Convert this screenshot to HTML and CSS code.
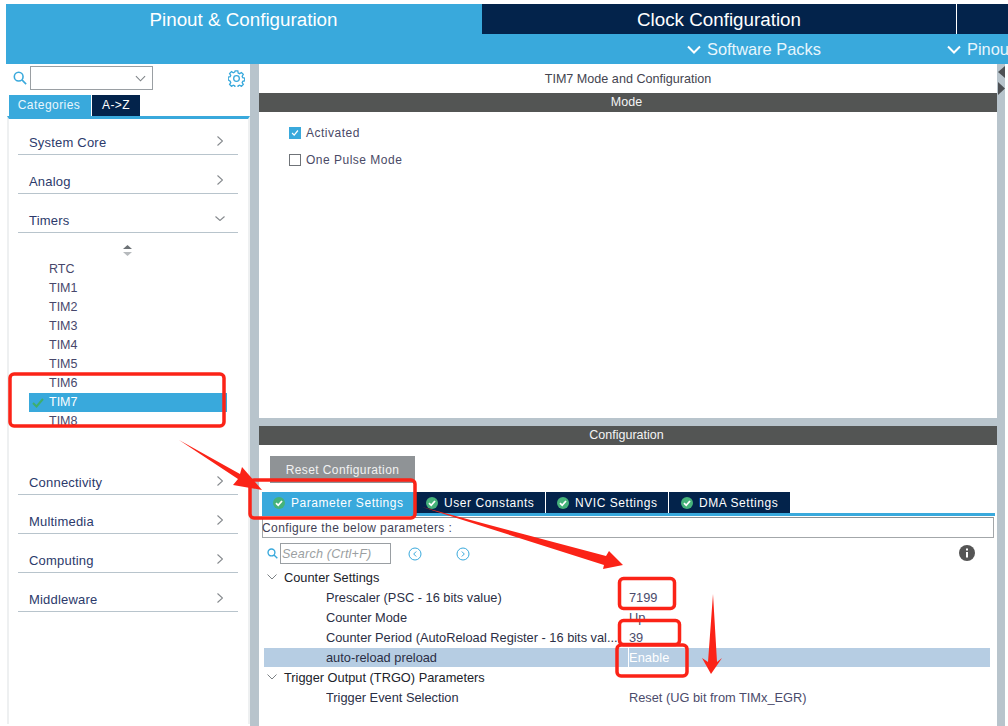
FILE: index.html
```html
<!DOCTYPE html>
<html lang="en">
<head>
<meta charset="utf-8">
<title>TIM7 Mode and Configuration</title>
<link rel="stylesheet" href="styles.css">
</head>
<body>
<div class="app">
  <header class="header">
    <div class="tabs-top">
      <div class="top-tab active">Pinout &amp; Configuration</div>
      <div class="top-tab clock">Clock Configuration</div>
      <div class="top-tab rest"></div>
    </div>
    <div class="subbar">
      <div class="sub sw"><svg class="sub-chev" viewBox="0 0 14 9"><path d="M1 1.500 7 7.500 13 1.500"/></svg>Software Packs</div>
      <div class="sub po"><svg class="sub-chev" viewBox="0 0 14 9"><path d="M1 1.500 7 7.500 13 1.500"/></svg>Pinout</div>
    </div>
  </header>
  <main class="main">
    <aside class="side">
      <div class="searchrow">
        <svg class="mag" viewBox="0 0 16 16"><circle cx="6.500" cy="6.500" r="5"/><path d="M10.200 10.200 15 15"/></svg>
        <div class="combo"><svg class="combo-chev" viewBox="0 0 12 7"><path d="M1 1 6 6 11 1"/></svg></div>
        <svg class="gear" viewBox="0 0 18 18"><circle cx="9" cy="9" r="3"/><path d="M7.600 1h2.800l.4 2.200 1.500.7 1.900-1.200 2 2-1.200 1.900.6 1.500 2.100.5v2.800l-2.100.5-.6 1.500 1.200 1.900-2 2-1.900-1.200-1.500.6-.4 2.200H7.600l-.5-2.200-1.500-.6-1.900 1.200-2-2 1.200-1.900-.6-1.500L.2 10.400V7.600l2.100-.5.6-1.500-1.200-1.900 2-2 1.900 1.200 1.500-.7z"/></svg>
      </div>
      <div class="side-tabs">
        <div class="stab on">Categories</div>
        <div class="stab">A-&gt;Z</div>
      </div>
      <div class="tree">
        <div class="cat"><span>System Core</span><svg class="ch-r" viewBox="0 0 6 10"><path d="M.5 .5 5.500 5 .5 9.500"/></svg></div>
        <div class="cat"><span>Analog</span><svg class="ch-r" viewBox="0 0 6 10"><path d="M.5 .5 5.500 5 .5 9.500"/></svg></div>
        <div class="cat"><span>Timers</span><svg class="ch-d" viewBox="0 0 10 5"><path d="M.5 .5 5 4.500 9.500 .5"/></svg></div>
        <div class="sort"><svg viewBox="0 0 9 11"><path class="up" d="M4.500 0 9 4H0z"/><path class="dn" d="M4.500 11 0 7h9z"/></svg></div>
        <ul class="timers">
          <li>RTC</li><li>TIM1</li><li>TIM2</li><li>TIM3</li><li>TIM4</li><li>TIM5</li><li>TIM6</li>
          <li class="sel"><svg class="tick" viewBox="0 0 12 10"><path d="M1 5 4.500 8.500 11 1"/></svg>TIM7</li>
          <li>TIM8</li>
        </ul>
        <div class="cat"><span>Connectivity</span><svg class="ch-r" viewBox="0 0 6 10"><path d="M.5 .5 5.500 5 .5 9.500"/></svg></div>
        <div class="cat"><span>Multimedia</span><svg class="ch-r" viewBox="0 0 6 10"><path d="M.5 .5 5.500 5 .5 9.500"/></svg></div>
        <div class="cat"><span>Computing</span><svg class="ch-r" viewBox="0 0 6 10"><path d="M.5 .5 5.500 5 .5 9.500"/></svg></div>
        <div class="cat"><span>Middleware</span><svg class="ch-r" viewBox="0 0 6 10"><path d="M.5 .5 5.500 5 .5 9.500"/></svg></div>
      </div>
    </aside>
    <section class="content">
      <div class="mode-pane">
        <div class="pane-title">TIM7 Mode and Configuration</div>
        <div class="dark-bar">Mode</div>
        <label class="chk first"><span class="box on"><svg viewBox="0 0 12 12"><path d="M2.500 6 5 8.500 9.500 3"/></svg></span>Activated</label>
        <label class="chk"><span class="box"></span>One Pulse Mode</label>
      </div>
      <div class="splitter"></div>
      <div class="conf-pane">
        <div class="dark-bar">Configuration</div>
        <div class="reset">Reset Configuration</div>
        <div class="conf-tabs">
          <div class="ctab on"><svg class="okic" viewBox="0 0 12 12"><circle cx="6" cy="6" r="6"/><path d="M3 6.200 5.200 8.300 9 4"/></svg>Parameter Settings</div>
          <div class="ctab"><svg class="okic" viewBox="0 0 12 12"><circle cx="6" cy="6" r="6"/><path d="M3 6.200 5.200 8.300 9 4"/></svg>User Constants</div>
          <div class="ctab"><svg class="okic" viewBox="0 0 12 12"><circle cx="6" cy="6" r="6"/><path d="M3 6.200 5.200 8.300 9 4"/></svg>NVIC Settings</div>
          <div class="ctab"><svg class="okic" viewBox="0 0 12 12"><circle cx="6" cy="6" r="6"/><path d="M3 6.200 5.200 8.300 9 4"/></svg>DMA Settings</div>
        </div>
        <div class="hint">Configure the below parameters :</div>
        <div class="toolbar">
          <svg class="mag small" viewBox="0 0 16 16"><circle cx="6.500" cy="6.500" r="5"/><path d="M10.200 10.200 15 15"/></svg>
          <div class="search">Search (Crtl+F)</div>
          <svg class="nav" viewBox="0 0 14 14"><circle cx="7" cy="7" r="6"/><path d="M8.200 4.500 5.700 7 8.200 9.500"/></svg>
          <svg class="nav" viewBox="0 0 14 14"><circle cx="7" cy="7" r="6"/><path d="M5.800 4.500 8.300 7 5.800 9.500"/></svg>
          <svg class="info" viewBox="0 0 16 16"><circle cx="8" cy="8" r="8"/><rect x="7" y="7" width="2" height="5.500"/><rect x="7" y="3.500" width="2" height="2"/></svg>
        </div>
        <div class="params">
          <div class="group"><svg class="gchev" viewBox="0 0 10 6"><path d="M.5 .5 5 5 9.500 .5"/></svg>Counter Settings</div>
          <div class="param"><span class="pname">Prescaler (PSC - 16 bits value)</span><span class="pval">7199</span></div>
          <div class="param"><span class="pname">Counter Mode</span><span class="pval">Up</span></div>
          <div class="param"><span class="pname">Counter Period (AutoReload Register - 16 bits val...</span><span class="pval">39</span></div>
          <div class="param hl"><span class="pname">auto-reload preload</span><span class="pval en">Enable</span></div>
          <div class="group"><svg class="gchev" viewBox="0 0 10 6"><path d="M.5 .5 5 5 9.500 .5"/></svg>Trigger Output (TRGO) Parameters</div>
          <div class="param"><span class="pname">Trigger Event Selection</span><span class="pval">Reset (UG bit from TIMx_EGR)</span></div>
        </div>
      </div>
    </section>
    <div class="rail">
      <svg viewBox="0 0 7 30"><path d="M0 6 7 0V12z"/><path d="M0 16 7 22.500 0 29z"/></svg>
    </div>
  </main>
  <svg class="marks" viewBox="0 0 1008 726">
    <g class="box-r">
      <rect x="10" y="374" width="214" height="52" rx="4"/>
      <rect x="250" y="480" width="165" height="38" rx="4"/>
      <rect x="619.500" y="578.500" width="55" height="30" rx="4"/>
      <rect x="619.500" y="620.500" width="60" height="24" rx="4"/>
      <rect x="617" y="645" width="70" height="31" rx="4"/>
    </g>
    <g class="arr">
      <path d="M179 440 240 474 242 467 262 490 233 485 238 479z"/>
      <path d="M422 507 606 556 609 551 623 565 603 569 604 565z"/>
      <path d="M713 594 717 662 722 658 711 674 702 658 708 662z"/>
    </g>
  </svg>
</div>
</body>
</html>
```
FILE: styles.css
```css
* { box-sizing: border-box; }
html, body { margin: 0; padding: 0; background: #fff; }
body { font-family: "Liberation Sans", Arial, sans-serif; font-size: 12px; color: #39396b; }
.app { position: relative; width: 1008px; height: 726px; overflow: hidden; display: flex; flex-direction: column; padding-top: 4px; }

.header { height: 60px; margin-left: 6px; background: #39a9dc; flex: none; color: #fff; }
.tabs-top { display: flex; height: 30px; }
.top-tab { font-size: 18.800px; line-height: 31px; text-align: center; color: #fff; }
.top-tab.active { width: 476px; padding-right: 1px; }
.top-tab.clock { width: 475px; background: #03234b; border-right: 1px solid #fff; }
.top-tab.rest { flex: 1; background: #03234b; }
.subbar { display: flex; height: 30px; font-size: 16.400px; color: #e8f6fc; }
.sub { display: flex; align-items: center; white-space: nowrap; }
.sub.sw { margin-left: 681px; width: 260px; flex: none; }
.sub-chev { width: 14px; height: 9px; flex: none; margin-right: 6px; fill: none; stroke: #fff; stroke-width: 2; }
.sub.po { flex: 1; overflow: hidden; }

.main { flex: 1; display: flex; min-height: 0; }
.side { width: 250px; flex: none; padding-left: 7px; position: relative; }
.searchrow { display: flex; align-items: center; height: 24px; margin-top: 2px; padding-left: 6px; }
.mag { width: 14px; height: 14px; fill: none; stroke: #39a9dc; stroke-width: 1.800; flex: none; }
.combo { width: 123px; height: 24px; margin-left: 3px; border: 1px solid #9a9fa3; position: relative; }
.combo-chev { position: absolute; right: 6px; top: 8px; width: 11px; height: 7px; fill: none; stroke: #7f8488; stroke-width: 1.200; }
.gear { width: 17px; height: 17px; margin-left: 75px; fill: none; stroke: #39a9dc; stroke-width: 1.400; flex: none; }
.side-tabs { display: flex; margin-top: 5px; margin-left: 2px; height: 21px; gap: 1px; }
.stab { background: #03234b; color: #fff; line-height: 21px; text-align: center; width: 48px; letter-spacing: .45px; }
.stab.on { background: #39a9dc; width: 82px; padding-right: 2px; color: #e8f6fc; }
.tree { border-top: 3px solid #39a9dc; border-left: 2px solid #eef0f1; border-right: 2px solid #eef0f1; padding: 0 10px 0 9px; height: 608px; width: 243px; }
.cat { height: 39px; display: flex; align-items: flex-end; justify-content: space-between; border-bottom: 1px solid #b8c4cc; padding: 0 14px 3px 11px; font-size: 13px; line-height: 16px; letter-spacing: .2px; color: #2c3a6b; }
.cat:first-child { height: 36px; }
.ch-r { width: 6px; height: 10px; fill: none; stroke: #85898d; stroke-width: 1.100; margin-bottom: 5px; margin-right: 1px; }
.ch-d { width: 10px; height: 5px; fill: none; stroke: #85898d; stroke-width: 1.100; margin-bottom: 8px; margin-right: -1px; }
.sort { height: 27px; display: flex; padding: 12px 0 0 105px; }
.sort svg { width: 9px; height: 11px; }
.up { fill: #6d7276; }
.dn { fill: #b6babd; }
.timers { list-style: none; margin: 0 0 0 11px; padding: 0; height: 196px; width: 198px; }
.timers li { height: 19px; line-height: 19px; padding-left: 20px; font-size: 12.500px; color: #47476b; position: relative; }
.timers li.sel { background: #39a9dc; color: #fff; }
.tick { position: absolute; left: 3px; top: 5px; width: 12px; height: 10px; fill: none; stroke: #3fae6c; stroke-width: 2; }

.content { width: 747px; padding-left: 9px; flex: none; background: #b8c4cc; display: flex; flex-direction: column; position: relative; }
.mode-pane { height: 354px; background: #fff; flex: none; }
.pane-title { height: 29px; padding-top: 1px; line-height: 29px; font-size: 12.600px; text-align: center; color: #44444f; }
.dark-bar { height: 19px; line-height: 19px; font-size: 12.500px; padding-right: 3px; text-align: center; background: #535554; color: #f4f4f4; }
.chk { display: flex; align-items: center; height: 27px; margin-left: 30px; color: #4a4a66; letter-spacing: .5px; }
.chk.first { margin-top: 7px; }
.box { width: 12px; height: 12px; border: 1px solid #6f7378; margin-right: 5px; background: #fff; flex: none; display: block; }
.box.on { background: #39a9dc; border-color: #39a9dc; }
.box svg { display: block; width: 10px; height: 10px; fill: none; stroke: #fff; stroke-width: 1.500; }
.splitter { height: 8px; flex: none; }
.conf-pane { flex: 1; background: #fff; min-height: 0; }
.reset { width: 145px; height: 27px; line-height: 29px; margin: 11px 0 0 11px; background: #8f9396; color: #f2f2f2; text-align: center; letter-spacing: .4px; }
.conf-tabs { display: flex; height: 21px; margin: 9px 2px 0 3px; gap: 1px; box-shadow: 0 3px 0 #39a9dc; align-items: stretch; }
.ctab { background: #03234b; color: #fff; display: flex; align-items: center; padding: 0; letter-spacing: .55px; white-space: nowrap; }
.ctab.on { background: #39a9dc; width: 153px; padding-left: 11px; }
.ctab:nth-child(2) { width: 129px; padding-left: 10px; }
.ctab:nth-child(3) { width: 122px; padding-left: 11px; }
.ctab:nth-child(4) { width: 121px; padding-left: 12px; }
.okic { width: 12px; height: 12px; margin-right: 6px; flex: none; }
.okic circle { fill: #45b27a; }
.okic path { fill: none; stroke: #fff; stroke-width: 1.800; }
.hint { margin: 4px 3px 0 3px; height: 21px; border: 1px solid #a3a7aa; border-top-color: #8a8e91; line-height: 20px; text-indent: -1px; color: #3f3f55; letter-spacing: .4px; }
.toolbar { display: flex; align-items: center; height: 27px; margin-top: 2px; padding-left: 8px; position: relative; }
.mag.small { width: 11px; height: 11px; stroke-width: 2; }
.search { width: 111px; height: 21px; margin-left: 2px; border: 1px solid #9a9fa3; line-height: 20px; padding-left: 1px; font-size: 12.600px; font-style: italic; color: #9b9fa2; letter-spacing: .2px; }
.nav { width: 14px; height: 14px; margin-left: 17px; fill: none; stroke: #39a9dc; stroke-width: 1; }
.nav + .nav { margin-left: 34px; }
.info { width: 16px; height: 16px; position: absolute; right: 22px; top: 5px; fill: #555; }
.info rect { fill: #fff; }
.params { padding-left: 5px; font-size: 12.800px; }
.group { height: 20px; padding: 0 0 0 3px; display: flex; align-items: center; color: #20232a; }
.gchev { width: 10px; height: 6px; margin-right: 7px; fill: none; stroke: #7c8185; stroke-width: 1; }
.param { height: 20px; line-height: 22px; display: flex; width: 726px; color: #2b2f45; }
.pname { width: 303px; margin-left: 62px; white-space: nowrap; overflow: hidden; }
.pval { color: #4b4b6b; white-space: nowrap; }
.hl { background: #b6cde3; height: 19px; margin-top: 1px; line-height: 19px; }
.en { color: #fff; border-left: 1px solid #fff; margin-left: -1px; letter-spacing: .1px; }

.rail { width: 8px; flex: none; background: #b8c4cc; position: relative; }
.rail svg { display: block; width: 7px; height: 30px; position: absolute; left: 1px; top: 2px; fill: #4d5054; }

.marks { position: absolute; left: 0; top: 0; width: 1008px; height: 726px; pointer-events: none; }
.box-r rect { fill: none; stroke: #fb2317; stroke-width: 3.500; }
.arr path { fill: #fb2317; }
```
